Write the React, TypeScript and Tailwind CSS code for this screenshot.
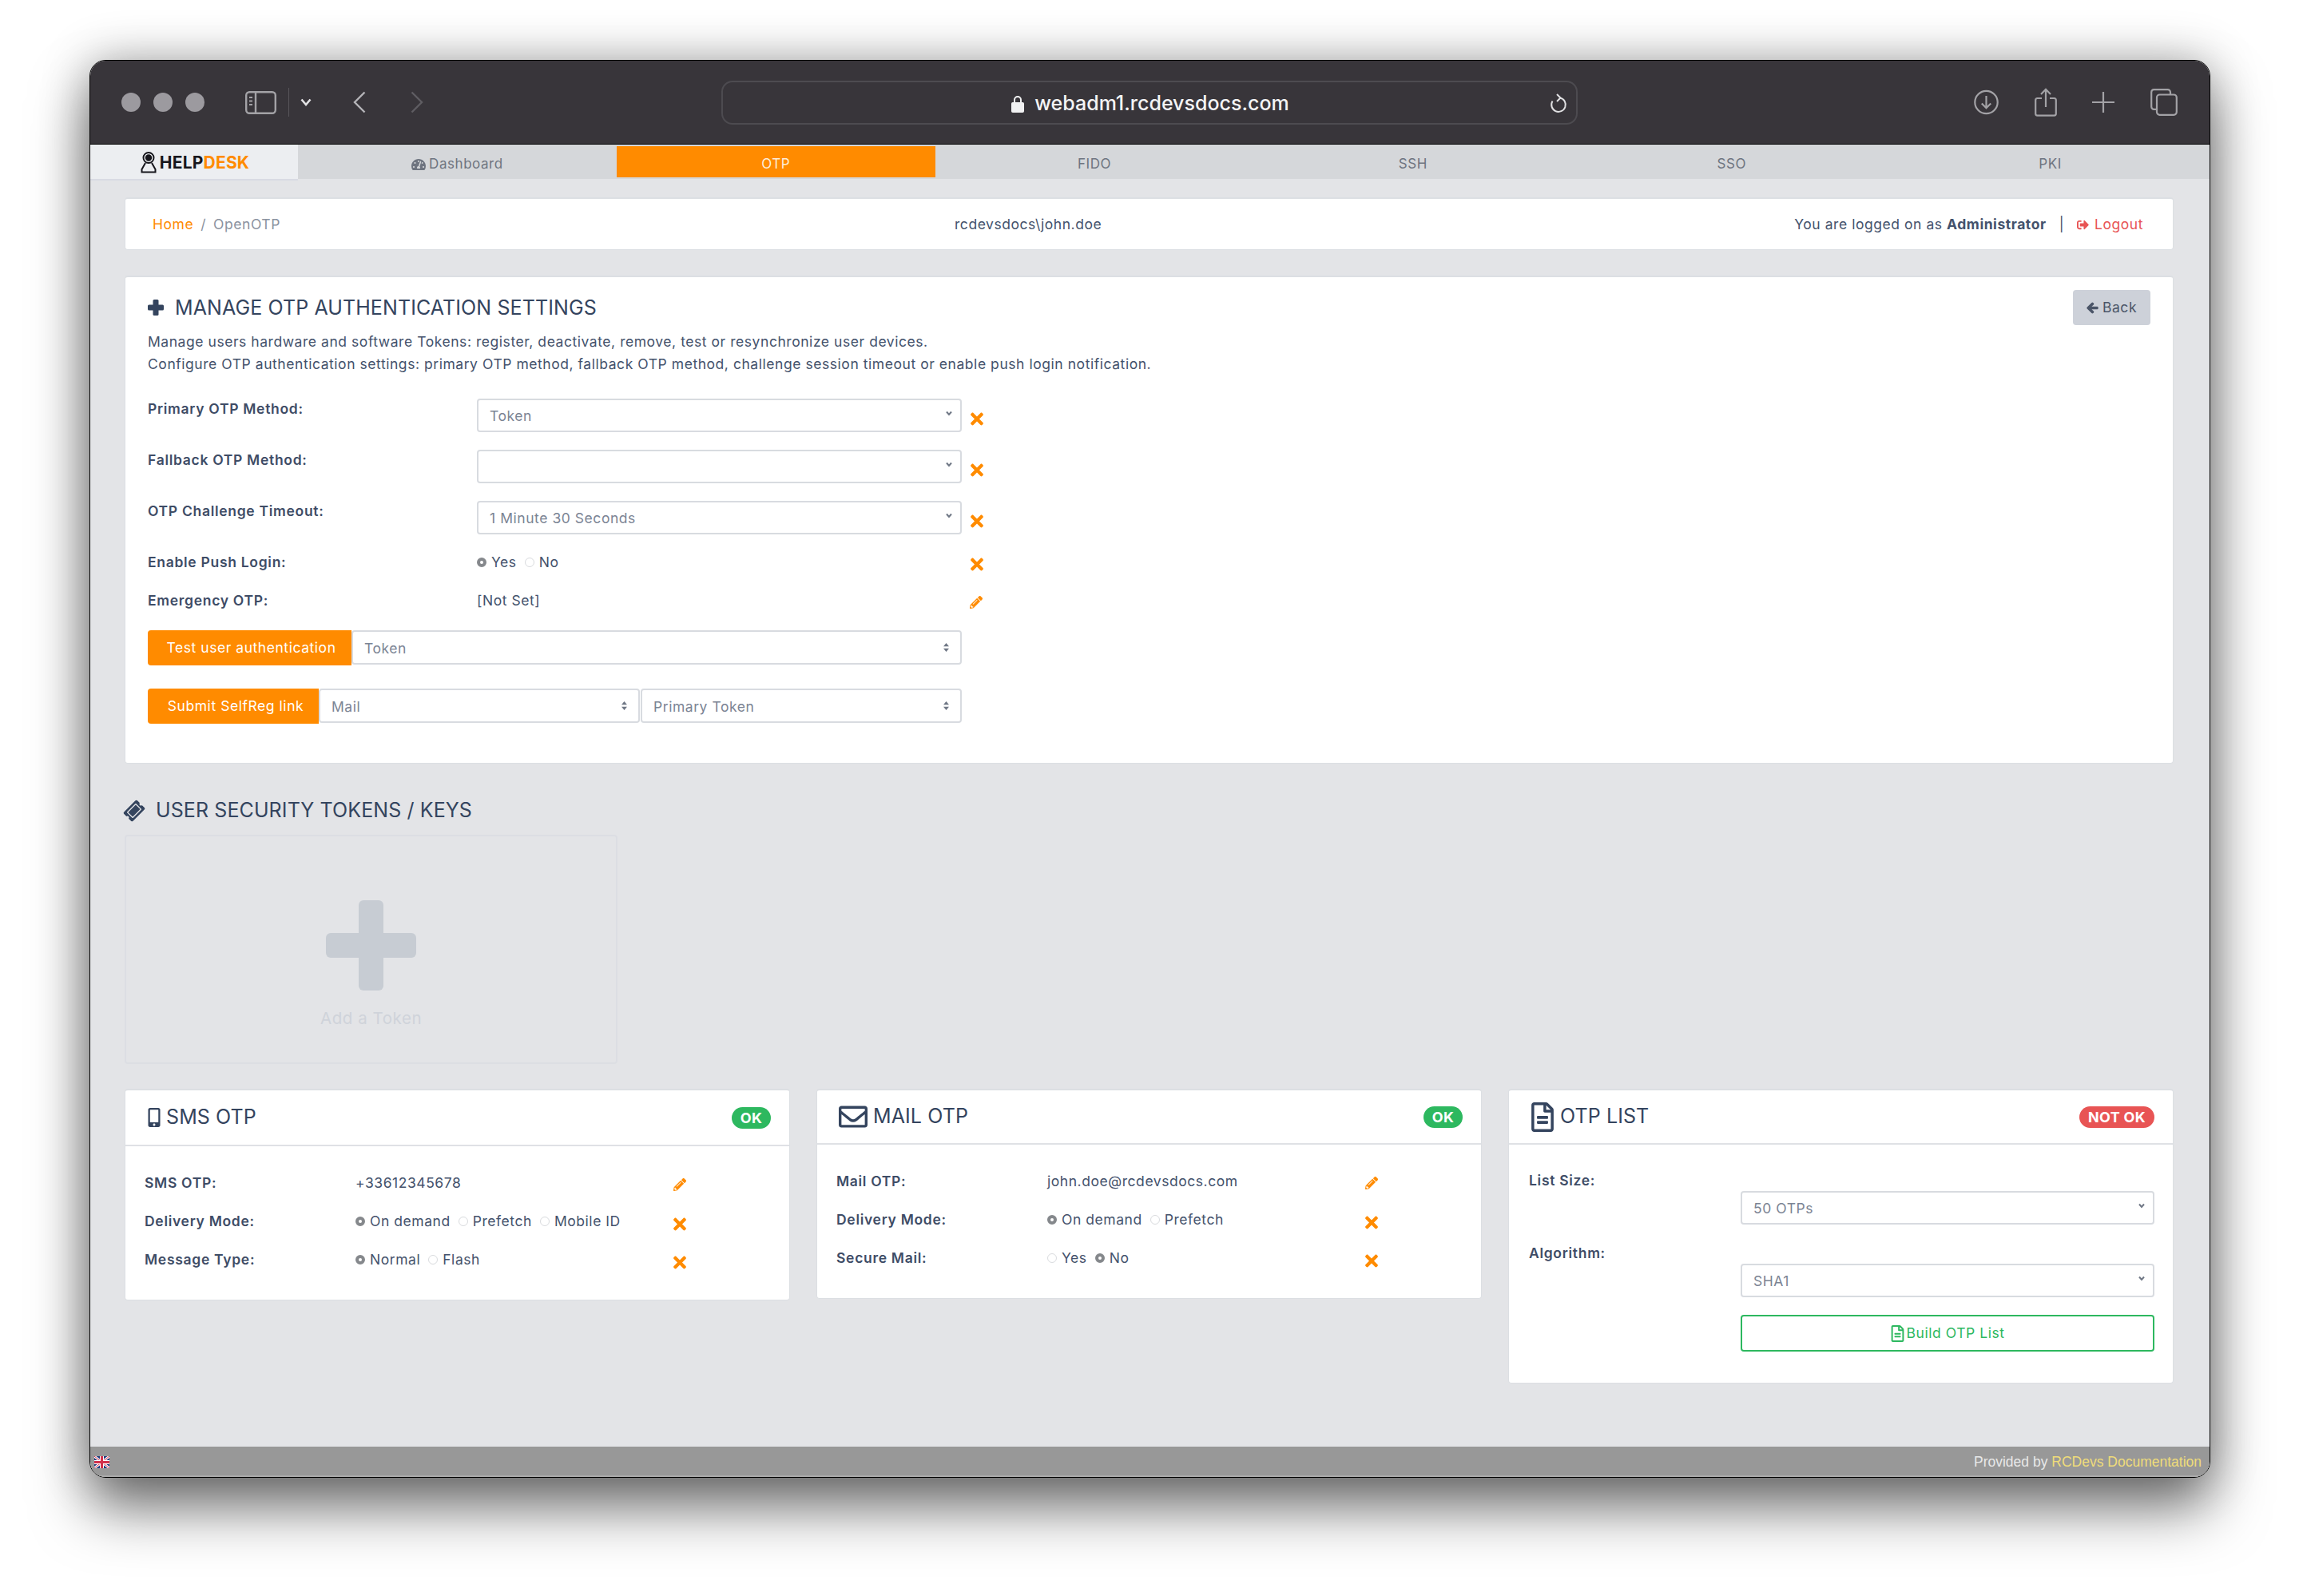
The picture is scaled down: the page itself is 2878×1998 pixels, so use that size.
import { FaArrowLeft, FaMobileAlt, FaPencilAlt, FaRegEnvelope, FaRegFileAlt, FaSignOutAlt, FaTachometerAlt, FaTicketAlt, FaTimes } from "react-icons/fa";

function Toolbar() {
  return (
    <div className="flex h-[105px] items-center border-b border-black bg-[#38353a] pl-[39px] tracking-normal text-[#a3a2a6]">
      <div className="h-6 w-6 rounded-full bg-[#9c9a9f]" />
      <div className="ml-4 h-6 w-6 rounded-full bg-[#9c9a9f]" />
      <div className="ml-4 h-6 w-6 rounded-full bg-[#9c9a9f]" />
      <svg className="ml-[51px] h-[29px] w-[39px]" viewBox="0 0 39 29" fill="none" stroke="currentColor" strokeWidth="2.4">
        <rect x="1.2" y="1.2" width="36.6" height="26.6" rx="4" />
        <path d="M13 1.5v26" />
        <path d="M5 8h4M5 12.5h4M5 17h4" strokeWidth="1.8" />
      </svg>
      <div className="ml-[15px] h-9 w-px bg-[#58565b]" />
      <svg className="ml-[14px] h-[10px] w-[14px]" viewBox="0 0 14 10" fill="none" stroke="#e2e2e4" strokeWidth="2.6">
        <path d="M1.5 1.5 7 8l5.5-6.5" />
      </svg>
      <svg className="ml-[52px] h-[28px] w-4" viewBox="0 0 16 28" fill="none" stroke="#b5b4b8" strokeWidth="2.4">
        <path d="M14.5 1.5 2 14l12.5 12.5" />
      </svg>
      <svg className="ml-[56px] h-[28px] w-4" viewBox="0 0 16 28" fill="none" stroke="#5f5d62" strokeWidth="2.4">
        <path d="M1.5 1.5 14 14 1.5 26.5" />
      </svg>
      <div className="relative ml-[373px] flex h-[55px] w-[1072px] items-center justify-center gap-[13px] rounded-[14px] border-2 border-[#4d4b50] pt-[4px] pl-[2px]">
        <svg className="h-[22px] w-4" viewBox="0 0 16 22" fill="#f1f1f2">
          <path d="M3 9V6a5 5 0 0 1 10 0v3h1.2A1.8 1.8 0 0 1 16 10.8v9.4a1.8 1.8 0 0 1-1.8 1.8H1.8A1.8 1.8 0 0 1 0 20.2v-9.4A1.8 1.8 0 0 1 1.8 9Zm2 0h6V6a3 3 0 0 0-6 0Z" />
        </svg>
        <span className="text-[25px] font-medium text-[#f4f4f5]">webadm1.rcdevsdocs.com</span>
        <svg className="absolute right-[10px] h-[26px] w-[24px]" viewBox="0 0 24 26" fill="none" stroke="#e0e0e2" strokeWidth="2">
          <path d="M14 5.500a8.800 8.800 0 1 1-9.500 4" />
          <path d="M10 1l4.500 4.500L10 10" />
        </svg>
      </div>
      <svg className="ml-[496px] h-[32px] w-[31px]" viewBox="0 0 31 32" fill="none" stroke="currentColor" strokeWidth="2.2">
        <circle cx="15.5" cy="16" r="14.2" />
        <path d="M15.5 8v15M9.8 17.5l5.7 5.7 5.7-5.7" />
      </svg>
      <svg className="ml-[45px] h-[36px] w-[28px]" viewBox="0 0 28 36" fill="none" stroke="currentColor" strokeWidth="2.2">
        <path d="M9 13H3.500A2.400 2.400 0 0 0 1.200 15.400v16.800a2.400 2.400 0 0 0 2.300 2.400h21a2.400 2.400 0 0 0 2.300-2.400V15.400A2.400 2.400 0 0 0 24.500 13H19" />
        <path d="M14 24V2M8 8l6-6.200L20 8" />
      </svg>
      <svg className="ml-[44px] h-[26px] w-[28px]" viewBox="0 0 28 26" fill="none" stroke="currentColor" strokeWidth="2.2">
        <path d="M14 0v26M0 13h28" />
      </svg>
      <svg className="ml-[45px] h-[34px] w-[34px]" viewBox="0 0 34 34" fill="none" stroke="currentColor" strokeWidth="2.2">
        <path d="M25 7V4.500A3.400 3.400 0 0 0 21.600 1.200H4.500A3.400 3.400 0 0 0 1.200 4.500v18a3.400 3.400 0 0 0 3.300 3.400H7" />
        <rect x="8" y="7.500" width="24.800" height="25.300" rx="3.500" />
      </svg>
    </div>
  );
}

function HelpdeskLogo() {
  return (
    <div className="flex items-center gap-1">
      <svg className="h-[27px] w-5" viewBox="0 0 20 27" fill="none" stroke="#16161c" strokeWidth="2">
        <circle cx="10" cy="7.500" r="6.500" />
        <circle cx="10" cy="7.500" r="3.200" fill="#16161c" />
        <path d="M6 14 1.500 22v3.500h17V22L14 14" />
      </svg>
      <span className="text-[21px] leading-none font-bold tracking-[0.2px] text-[#16161c]">
        HELP<span className="text-[#ff8b00]">DESK</span>
      </span>
    </div>
  );
}

function NavBar() {
  const tabs = ["OTP", "FIDO", "SSH", "SSO", "PKI"];
  return (
    <div className="flex h-[43px] items-start bg-[#d5d7da] text-[17px] text-[#6e7480]">
      <div className="relative z-10 flex h-[45px] w-[260px] items-center justify-center border-b-2 border-[#d8dae3] bg-[#eceef1] pt-px pl-[2px]">
        <HelpdeskLogo />
      </div>
      <div className="flex h-[43px] flex-1 items-center justify-center gap-1 pt-[11px] pb-[5px]">
        <FaTachometerAlt className="h-[18px] w-[18px]" />
        Dashboard
      </div>
      {tabs.map((t) =>
        t === "OTP" ? (
          <div key={t} className="mt-[2px] flex h-[39px] flex-1 items-center justify-center bg-[#ff8b00] pt-[7px] text-[#fdeedb]">
            {t}
          </div>
        ) : (
          <div key={t} className="flex h-[43px] flex-1 items-center justify-center pt-[11px] pb-[5px]">
            {t}
          </div>
        )
      )}
    </div>
  );
}

function Caret({ double = false }: { double?: boolean }) {
  if (double) {
    return (
      <svg className="absolute top-[14px] right-[14px] h-[11px] w-[7px]" viewBox="0 0 7 11" fill="#6f7785">
        <path d="M3.500 0 7 4.200H0ZM3.500 11 0 6.800h7Z" />
      </svg>
    );
  }
  return (
    <svg className="absolute top-[13px] right-[10px] h-[7px] w-[8px]" viewBox="0 0 8 7" fill="none" stroke="#6f7785" strokeWidth="2">
      <path d="M1 1.500 4 5l3-3.500" />
    </svg>
  );
}

function Select({ value, className, double = false }: { value?: string; className: string; double?: boolean }) {
  return (
    <div className={`relative flex items-center rounded-[4px] border-2 border-[#d8dbe0] bg-white pl-[14px] text-[#7b8494] ${className}`}>
      <span className="pt-[3px]">{value}</span>
      <Caret double={double} />
    </div>
  );
}

function Radio({ on = false }: { on?: boolean }) {
  return on ? (
    <span className="h-3 w-3 shrink-0 rounded-full border-[4px] border-[#85888c] bg-white" />
  ) : (
    <span className="h-3 w-3 shrink-0 rounded-full border border-[#d9dbde] bg-white" />
  );
}

function Choices({ items, className = "" }: { items: [string, boolean][]; className?: string }) {
  return (
    <div className={`flex items-center ${className}`}>
      {items.map(([label, on]) => (
        <div key={label} className="mr-[10px] flex items-center gap-[6px]">
          <Radio on={on} />
          <span>{label}</span>
        </div>
      ))}
    </div>
  );
}

function Remove({ className = "" }: { className?: string }) {
  return <FaTimes className={`h-[23px] w-[16px] text-[#ff8b00] ${className}`} />;
}

function Edit({ className = "" }: { className?: string }) {
  return <FaPencilAlt className={`h-4 w-4 text-[#ff8b00] ${className}`} />;
}

function FieldLabel({ children, className = "" }: { children: React.ReactNode; className?: string }) {
  return <div className={`font-semibold tracking-[0.7px] text-[#3e4c66] ${className}`}>{children}</div>;
}

function SelectRow({ label, value }: { label: string; value?: string }) {
  return (
    <div className="mb-[22px] flex items-start">
      <FieldLabel className="w-[412px] pt-px leading-[24px]">{label}</FieldLabel>
      <Select value={value} className="h-[42px] w-[607px]" />
      <Remove className="mt-[14px] ml-[11px]" />
    </div>
  );
}

function SettingsCard() {
  return (
    <div className="mb-[45px] rounded-[4px] border border-t-2 border-[#dcdfe3] bg-white px-[28px] pt-4 pb-[49px]">
      <div className="flex h-[44px] items-center justify-between">
        <div className="flex items-center gap-[14px] pt-[2px] text-[25px] tracking-[0.1px] text-[#34445e]">
          <svg className="-mt-[2px] h-5 w-5" viewBox="0 0 20 20" fill="currentColor">
            <rect x="6.500" width="7" height="20" rx="1.500" />
            <rect y="6.500" width="20" height="7" rx="1.500" />
          </svg>
          MANAGE OTP AUTHENTICATION SETTINGS
        </div>
        <button className="flex h-[44px] w-[97px] items-center justify-center gap-[5px] rounded-[4px] bg-[#cdd1d9] pt-px text-[#4b5568]">
          <FaArrowLeft className="h-[15px] w-[15px] [stroke-width:40]" />
          Back
        </button>
      </div>
      <div className="mt-[7px] leading-[28px]">
        <p>Manage users hardware and software Tokens: register, deactivate, remove, test or resynchronize user devices.</p>
        <p>Configure OTP authentication settings: primary OTP method, fallback OTP method, challenge session timeout or enable push login notification.</p>
      </div>
      <div className="mt-[29px]">
        <SelectRow label="Primary OTP Method:" value="Token" />
        <SelectRow label="Fallback OTP Method:" />
        <SelectRow label="OTP Challenge Timeout:" value="1 Minute 30 Seconds" />
      </div>
      <div className="mt-[23px] flex h-6 items-center">
        <FieldLabel className="w-[412px]">Enable Push Login:</FieldLabel>
        <Choices className="w-[607px]" items={[["Yes", true], ["No", false]]} />
        <Remove className="mt-[4px] ml-[11px]" />
      </div>
      <div className="mt-[24px] flex h-6 items-center">
        <FieldLabel className="w-[412px]">Emergency OTP:</FieldLabel>
        <div className="w-[607px]">[Not Set]</div>
        <Edit className="mt-[3px] ml-[10px]" />
      </div>
      <div className="mt-[25px] flex h-[44px] w-[1019px] items-start">
        <div className="flex h-[44px] w-[255px] items-center justify-center rounded-l-[4px] bg-[#ff8b00] pl-[4px] text-white">Test user authentication</div>
        <Select value="Token" className="h-[43px] flex-1" double />
      </div>
      <div className="mt-[29px] flex h-[44px] w-[1019px] items-start">
        <div className="flex h-[44px] w-[214px] items-center justify-center rounded-l-[4px] bg-[#ff8b00] pl-[6px] text-white">Submit SelfReg link</div>
        <Select value="Mail" className="h-[43px] w-[402px]" double />
        <Select value="Primary Token" className="ml-px h-[43px] flex-1" double />
      </div>
    </div>
  );
}

function TokensSection() {
  return (
    <div>
      <div className="flex h-7 items-center gap-[15px] text-[25px] tracking-[0.1px] text-[#34445e]">
        <FaTicketAlt className="h-[22px] w-[24px] -rotate-45" />
        USER SECURITY TOKENS / KEYS
      </div>
      <div className="mt-4 flex h-[287px] w-[617px] flex-col items-center rounded-[4px] border-2 border-[#dcdee3]">
        <div className="relative mt-[80px] h-[113px] w-[113px]">
          <div className="absolute top-0 left-[41px] h-[113px] w-[31px] rounded-[6px] bg-[#c7ccd3]" />
          <div className="absolute top-[41px] left-0 h-[31px] w-[113px] rounded-[6px] bg-[#c7ccd3]" />
        </div>
        <div className="mt-[20px] text-[20.5px] text-[#cfd3da]">Add a Token</div>
      </div>
    </div>
  );
}

function Badge({ ok }: { ok: boolean }) {
  return ok ? (
    <span className="flex h-[27px] w-[49px] items-center justify-center rounded-full bg-[#2db85f] text-[18px] font-bold tracking-[0.3px] text-white">OK</span>
  ) : (
    <span className="flex h-[27px] w-[94px] items-center justify-center rounded-full bg-[#e85454] text-[18px] font-bold tracking-[0.3px] text-white">NOT OK</span>
  );
}

function Panel({ icon, title, ok, headerH, pad, children }: { icon: React.ReactNode; title: string; ok: boolean; headerH: string; pad: string; children: React.ReactNode }) {
  return (
    <div className="rounded-[4px] border border-t-2 border-[#dcdfe3] bg-white">
      <div className={`flex items-center justify-between border-b-2 border-[#dfe1e5] pr-[23px] ${headerH} ${pad}`}>
        <div className="flex items-center text-[25px] tracking-[0.1px] text-[#34445e]">
          {icon}
          {title}
        </div>
        <Badge ok={ok} />
      </div>
      {children}
    </div>
  );
}

function PanelRow({ label, children, action }: { label: string; children: React.ReactNode; action: React.ReactNode }) {
  return (
    <div className="grid h-[48px] grid-cols-[264px_398px_auto] items-center">
      <FieldLabel>{label}</FieldLabel>
      <div>{children}</div>
      {action}
    </div>
  );
}

function Panels() {
  return (
    <div className="mt-[31px] grid grid-cols-3 items-start gap-[33px]">
      <Panel ok title="SMS OTP" headerH="h-[70px]" pad="pl-[28px]" icon={<FaMobileAlt className="mr-[7px] h-[24px] w-[16px]" />}>
        <div className="pt-[22px] pb-[26px] pl-[24px]">
          <PanelRow label="SMS OTP:" action={<Edit className="mt-[4px]" />}>+33612345678</PanelRow>
          <PanelRow label="Delivery Mode:" action={<Remove className="mt-[6px]" />}>
            <Choices items={[["On demand", true], ["Prefetch", false], ["Mobile ID", false]]} />
          </PanelRow>
          <PanelRow label="Message Type:" action={<Remove className="mt-[6px]" />}>
            <Choices items={[["Normal", true], ["Flash", false]]} />
          </PanelRow>
        </div>
      </Panel>
      <Panel ok title="MAIL OTP" headerH="h-[68px]" pad="pl-[27px]" icon={<FaRegEnvelope className="mr-[7px] h-[36px] w-[36px]" />}>
        <div className="pt-[22px] pb-[26px] pl-[24px]">
          <PanelRow label="Mail OTP:" action={<Edit className="mt-[4px]" />}>john.doe@rcdevsdocs.com</PanelRow>
          <PanelRow label="Delivery Mode:" action={<Remove className="mt-[6px]" />}>
            <Choices items={[["On demand", true], ["Prefetch", false]]} />
          </PanelRow>
          <PanelRow label="Secure Mail:" action={<Remove className="mt-[6px]" />}>
            <Choices items={[["Yes", false], ["No", true]]} />
          </PanelRow>
        </div>
      </Panel>
      <Panel ok={false} title="OTP LIST" headerH="h-[68px]" pad="pl-[28px]" icon={<FaRegFileAlt className="mr-[8px] h-[37px] w-[28px]" />}>
        <div className="pt-[33px] pr-[23px] pb-[39px] pl-[25px]">
          <FieldLabel className="leading-[24px]">List Size:</FieldLabel>
          <Select value="50 OTPs" className="mt-[1px] ml-[265px] h-[42px]" />
          <FieldLabel className="mt-[24px] leading-[24px]">Algorithm:</FieldLabel>
          <Select value="SHA1" className="mt-[1px] ml-[265px] h-[42px]" />
          <button className="mt-[22px] ml-[265px] flex h-[46px] w-[calc(100%-265px)] items-center justify-center gap-[3px] rounded-[4px] border-2 border-[#2db85f] text-[#2db85f]">
            <FaRegFileAlt className="h-[21px] w-[17px]" />
            Build OTP List
          </button>
        </div>
      </Panel>
    </div>
  );
}

function UkFlag() {
  return (
    <svg className="h-[15px] w-[19px]" viewBox="0 0 19 15">
      <rect width="19" height="15" fill="#1f3a7d" />
      <path d="M0 0l19 15M19 0 0 15" stroke="#fff" strokeWidth="3" />
      <path d="M0 0l19 15M19 0 0 15" stroke="#d22f4b" strokeWidth="1" />
      <path d="M9.500 0v15M0 7.500h19" stroke="#fff" strokeWidth="5" />
      <path d="M9.500 0v15M0 7.500h19" stroke="#d22f4b" strokeWidth="3" />
    </svg>
  );
}

export default function App() {
  return (
    <div className="h-[1998px] w-[2878px] overflow-hidden bg-white pt-[75px] pl-[112px] font-['Inter',sans-serif] text-[17.5px] tracking-[0.55px] text-[#44526c]">
      <div className="flex h-[1775px] w-[2655px] flex-col overflow-hidden rounded-[20px] border border-black shadow-[0_40px_70px_rgba(0,0,0,0.5),0_0_60px_rgba(0,0,0,0.3)]">
        <Toolbar />
        <NavBar />
        <div className="flex-1 bg-[#e3e4e7] pt-[23px] pl-[43px]">
          <div className="w-[2565px]">
            <div className="mb-[32px] flex h-[66px] items-center rounded-[4px] border border-t-2 border-[#dcdfe3] bg-white pt-[2px] pr-[37px] pl-[34px]">
              <div className="flex w-[1004px] items-center gap-[9px]">
                <span className="text-[#ff8b00]">Home</span>
                <span className="text-[#8a92a0]">/</span>
                <span className="text-[#8a92a0]">OpenOTP</span>
              </div>
              <span>rcdevsdocs\john.doe</span>
              <div className="ml-auto flex items-center">
                <span>
                  You are logged on as <b className="font-bold">Administrator</b>
                </span>
                <span className="mx-[16px]">|</span>
                <span className="flex items-center gap-[7px] text-[#e85454]">
                  <FaSignOutAlt className="h-[15px] w-[15px]" />
                  Logout
                </span>
              </div>
            </div>
            <SettingsCard />
            <TokensSection />
            <Panels />
          </div>
        </div>
        <div className="flex h-[38px] items-center justify-between border-b-2 border-[#aaaaaa] bg-[#989898] pt-[2px] pr-[10px] pl-[5px] font-['Liberation_Sans',sans-serif] text-[17.5px] tracking-normal text-[#e8e8e8]">
          <UkFlag />
          <span>
            Provided by <span className="text-[#efdc7a]">RCDevs Documentation</span>
          </span>
        </div>
      </div>
    </div>
  );
}
